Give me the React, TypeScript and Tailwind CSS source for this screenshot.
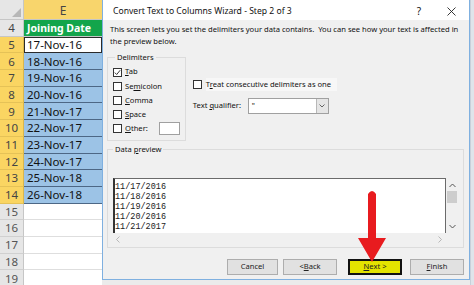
import React from "react";

const dataRows = [
  { n: 5, v: "17-Nov-16", kind: "active" },
  { n: 6, v: "18-Nov-16", kind: "sel" },
  { n: 7, v: "19-Nov-16", kind: "sel" },
  { n: 8, v: "20-Nov-16", kind: "sel" },
  { n: 9, v: "21-Nov-17", kind: "sel" },
  { n: 10, v: "22-Nov-17", kind: "sel" },
  { n: 11, v: "23-Nov-17", kind: "sel" },
  { n: 12, v: "24-Nov-17", kind: "sel" },
  { n: 13, v: "25-Nov-18", kind: "sel" },
  { n: 14, v: "26-Nov-18", kind: "sel" },
];

const emptyRows = [15, 16, 17, 18, 19];

const previewLines = ["11/17/2016", "11/18/2016", "11/19/2016", "11/20/2016", "11/21/2017"];

const Box = ({ checked }: { checked?: boolean }) => (
  <span className="w-[9px] h-[9px] border border-[#333] bg-white flex items-center justify-center shrink-0">
    {checked && (
      <svg width="7" height="7" viewBox="0 0 7 7">
        <path d="M0.8 3.6 L2.7 5.5 L6.2 1.2" fill="none" stroke="#222" strokeWidth="0.9" />
      </svg>
    )}
  </span>
);

const Sheet = () => (
  <div className="w-[102px] shrink-0 flex flex-col font-['Noto_Sans',sans-serif] text-[11.5px]">
    <div className="flex h-[20px] border-b border-[#c6c6c6]">
      <div className="w-[24px] bg-[#e6e6e6] border-r border-[#c6c6c6] relative">
        <div className="absolute right-[2px] bottom-[2px] w-0 h-0 border-l-[9px] border-l-transparent border-b-[9px] border-b-[#b7b7b7]" />
      </div>
      <div className="flex-1 bg-[#f8d56c] flex items-center justify-center text-[#444] text-[12px] pt-[2px]">E</div>
    </div>
    <div className="flex h-[16.7px] border-b border-[#c6c6c6]">
      <div className="w-[24px] bg-[#e6e6e6] border-r border-[#c6c6c6] flex items-center justify-center text-[#444]">4</div>
      <div className="flex-1 bg-[#13a54b] text-white font-bold flex items-center pl-[3px] text-[10.5px] leading-none whitespace-nowrap">
        Joining Date
      </div>
    </div>
    {dataRows.map((r) => (
      <div key={r.n} className="flex h-[16.7px]">
        <div className="w-[24px] bg-[#fad562] border-r border-[#d9b64c] border-b border-b-[#e5c257] flex items-center justify-center text-[#444]">
          {r.n}
        </div>
        <div
          className={
            r.kind === "active"
              ? "flex-1 bg-white border border-[#2b2b2b] flex items-center pl-[2px] text-[#111]"
              : "flex-1 bg-[#9cc3e6] border-b border-[#4d6785] flex items-center pl-[3px] text-[#111]"
          }
        >
          {r.v}
        </div>
      </div>
    ))}
    {emptyRows.map((n) => (
      <div key={n} className="flex h-[16.7px]">
        <div className="w-[24px] bg-[#e6e6e6] border-r border-[#c6c6c6] border-b border-b-[#d0d0d0] flex items-center justify-center text-[#555]">
          {n}
        </div>
        <div className="flex-1 bg-white border-b border-[#dedede]" />
      </div>
    ))}
  </div>
);

const Btn = ({ children, hot }: { children: React.ReactNode; hot?: boolean }) => (
  <div
    className={
      hot
        ? "w-[54px] h-[16px] bg-[#e3e300] border-2 border-[#111] flex items-center justify-center text-[#222]"
        : "w-[54px] h-[16px] bg-[#e1e1e1] border border-[#adadad] flex items-center justify-center text-[#222]"
    }
  >
    {children}
  </div>
);

const Dialog = () => (
  <div className="w-[368px] h-[280px] shrink-0 border-l border-r border-b border-[#7fb0e0] bg-[#f0f0f0] flex flex-col font-['Noto_Sans',sans-serif] text-[7.6px] text-[#111]">
    <div className="h-[20px] shrink-0 bg-white flex items-center pl-[10px] pr-[13px] text-[8.6px]">
      <span className="flex-1 pt-[2px]">Convert Text to Columns Wizard - Step 2 of 3</span>
      <span className="text-[10px] mr-[26px] pt-[2px]">?</span>
      <svg width="9" height="9" viewBox="0 0 9 9" className="mt-[2px]">
        <path d="M0.5 0.5 L8.5 8.5 M8.5 0.5 L0.5 8.5" stroke="#222" strokeWidth="0.9" />
      </svg>
    </div>
    <div className="flex flex-col pl-[4px] pr-[5px]">
      <div className="pl-[3px] mt-[3px] leading-[12px] whitespace-nowrap">
        <div>This screen lets you set the delimiters your data contains.&nbsp; You can see how your text is affected in</div>
        <div>the preview below.</div>
      </div>
      <div className="flex mt-[4px]">
        <fieldset className="w-[77px] h-[90px] border border-[#dcdcdc] px-[5px] pb-[2px]">
          <legend className="ml-[2px] px-[2px] leading-[12px]">Delimiters</legend>
          <div className="flex flex-col mt-[2px]">
            <label className="flex items-center gap-[3px] h-[14.2px]">
              <Box checked />
              <span><u>T</u>ab</span>
            </label>
            <label className="flex items-center gap-[3px] h-[14.2px]">
              <Box />
              <span>Se<u>m</u>icolon</span>
            </label>
            <label className="flex items-center gap-[3px] h-[14.2px]">
              <Box />
              <span><u>C</u>omma</span>
            </label>
            <label className="flex items-center gap-[3px] h-[14.2px]">
              <Box />
              <span><u>S</u>pace</span>
            </label>
            <label className="flex items-center gap-[3px] h-[14.2px]">
              <Box />
              <span><u>O</u>ther:</span>
              <span className="ml-[8px] w-[21px] h-[13px] bg-white border border-[#a0a0a0]" />
            </label>
          </div>
        </fieldset>
        <div className="flex flex-col ml-[7px] pt-[26px]">
          <label className="flex items-center gap-[4px] h-[14px]">
            <Box />
            <span className="bg-[#f7f7f7] pr-[6px] leading-[13px]">T<u>r</u>eat consecutive delimiters as one</span>
          </label>
          <div className="flex items-center mt-[7px]">
            <span className="w-[55px]">Text <u>q</u>ualifier:</span>
            <div className="w-[81px] h-[16px] bg-white border border-[#a0a0a0] flex">
              <span className="flex-1 pl-[3px] leading-[12px]">"</span>
              <span className="w-[12px] h-full bg-[#e5e5e5] border-l border-[#b8b8b8] flex items-center justify-center">
                <svg width="6" height="4" viewBox="0 0 6 4">
                  <path d="M0.5 0.5 L3 3 L5.5 0.5" fill="none" stroke="#555" strokeWidth="0.9" />
                </svg>
              </span>
            </div>
          </div>
        </div>
      </div>
      <fieldset className="mt-[2px] w-[357px] h-[105px] border border-[#dcdcdc] pl-[5px] pt-[23px]">
        <legend className="ml-0 px-[2px] leading-[12px]">Data <u>p</u>review</legend>
        <div className="flex flex-col w-[345px]">
          <div className="flex h-[55px]">
            <div className="flex-1 bg-white border-t border-r border-[#6b6b6b] border-l-2 border-l-[#333] font-['Liberation_Mono',monospace] text-[8.5px] leading-[10px] pt-[3px] text-[#222]">
              {previewLines.map((l) => (
                <div key={l}>{l}</div>
              ))}
            </div>
            <div className="w-[12px] flex flex-col items-center">
              <svg width="7" height="5" viewBox="0 0 7 5" className="mt-[5px]">
                <path d="M0.5 4 L3.5 1 L6.5 4" fill="none" stroke="#555" strokeWidth="1" />
              </svg>
              <div className="w-[10px] h-[12px] bg-[#cdcdcd] mt-[3px]" />
              <div className="flex-1" />
              <svg width="7" height="5" viewBox="0 0 7 5" className="mb-[4px]">
                <path d="M0.5 1 L3.5 4 L6.5 1" fill="none" stroke="#555" strokeWidth="1" />
              </svg>
            </div>
          </div>
          <div className="h-[12px] flex items-center justify-between pl-[3px] pr-[16px]">
            <svg width="4" height="7" viewBox="0 0 4 7">
              <path d="M3.5 0.5 L0.5 3.5 L3.5 6.5" fill="none" stroke="#aaa" strokeWidth="0.8" />
            </svg>
            <svg width="4" height="7" viewBox="0 0 4 7">
              <path d="M0.5 0.5 L3.5 3.5 L0.5 6.5" fill="none" stroke="#aaa" strokeWidth="0.8" />
            </svg>
          </div>
        </div>
      </fieldset>
      <div className="flex mt-[11px] pl-[120px]">
        <Btn>Cancel</Btn>
        <div className="ml-[5px]">
          <Btn>&lt; <u>B</u>ack</Btn>
        </div>
        <div className="ml-[11px]">
          <Btn hot><u>N</u>ext &gt;</Btn>
        </div>
        <div className="ml-[8px]">
          <Btn><u>F</u>inish</Btn>
        </div>
      </div>
    </div>
  </div>
);

export default function App() {
  return (
    <div className="w-[474px] h-[285px] overflow-hidden relative flex bg-[#ebebeb]">
      <Sheet />
      <Dialog />
      <div className="flex-1 bg-[#dfe4ea] border-l border-[#c8d0da]" />
      <svg className="absolute left-[356px] top-[188px]" width="32" height="76" viewBox="0 0 32 76">
        <path d="M12 6 Q16 0 20 6 L20 50 L30 50 L16 74 L2 50 L12 50 Z" fill="#e81b1f" />
      </svg>
    </div>
  );
}
